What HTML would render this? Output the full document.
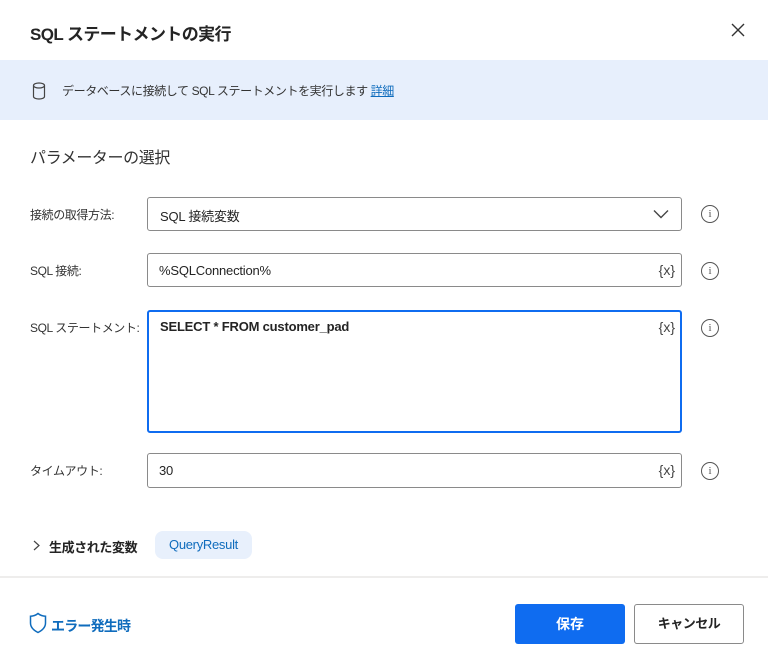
<!DOCTYPE html>
<html><head><meta charset="utf-8"><style>
*{box-sizing:border-box;margin:0;padding:0}
body{width:768px;height:668px;background:#fff;font-family:"Liberation Sans","Noto Sans CJK JP",sans-serif;color:#242424;position:relative;overflow:hidden}
.a{position:absolute;white-space:nowrap}
.title{left:30px;top:20px;font-size:17px;font-weight:bold;letter-spacing:-0.6px}
.banner{left:0;top:60px;width:768px;height:60px;background:#e7effc}
.btxt{left:62px;top:82px;font-size:12px;color:#333;letter-spacing:-0.4px}
.btxt a{color:#0f6cbd;text-decoration:underline}
.h2{left:30px;top:144px;font-size:16px;color:#333;letter-spacing:-0.4px}
.lbl{left:30px;font-size:12px;color:#333;letter-spacing:-0.4px}
.box{left:147px;width:535px;border:1px solid #8a8a8a;border-radius:3px;background:#fff}
.val{font-size:13px;position:absolute;left:12px;top:9px;letter-spacing:-0.2px}
.x{position:absolute;right:6px;top:8px;font-size:14px;color:#444}
.info{left:701px;width:18px;height:18px;border:1.3px solid #555;border-radius:50%;font-size:11px;text-align:center;line-height:16px;color:#555;font-family:"Liberation Serif",serif}
.div{left:0;top:576px;width:768px;height:2px;background:#eeedec}
</style></head><body>
<div class="a title">SQL ステートメントの実行</div>
<svg class="a" style="left:731px;top:23px" width="14" height="14" viewBox="0 0 14 14"><path d="M1 1L13 13M13 1L1 13" stroke="#333" stroke-width="1.4"/></svg>
<div class="a banner"></div>
<svg class="a" style="left:32px;top:82px" width="14" height="18" viewBox="0 0 14 18"><ellipse cx="7" cy="3.5" rx="5.5" ry="2.5" fill="none" stroke="#444" stroke-width="1.2"/><path d="M1.5 3.5V14.5C1.5 16 4 17 7 17S12.5 16 12.5 14.5V3.5" fill="none" stroke="#444" stroke-width="1.2"/></svg>
<div class="a btxt">データベースに接続して SQL ステートメントを実行します <a>詳細</a></div>
<div class="a h2">パラメーターの選択</div>

<div class="a lbl" style="top:206px">接続の取得方法:</div>
<div class="a box" style="top:197px;height:34px"><span class="val" style="top:8px">SQL 接続変数</span>
<svg style="position:absolute;right:12px;top:11px" width="16" height="10" viewBox="0 0 16 10"><path d="M1 1.5L8 8.5L15 1.5" fill="none" stroke="#444" stroke-width="1.4"/></svg></div>
<div class="a info" style="top:205px">i</div>

<div class="a lbl" style="top:262px">SQL 接続:</div>
<div class="a box" style="top:253px;height:34px"><span class="val" style="left:11px">%SQLConnection%</span><span class="x">{x}</span></div>
<div class="a info" style="top:262px">i</div>

<div class="a lbl" style="top:319px">SQL ステートメント:</div>
<div class="a box" style="top:310px;height:123px;border:2px solid #0f6cf0"><span class="val" style="left:11px;top:7px;font-weight:bold">SELECT * FROM customer_pad</span><span class="x" style="top:7px;right:5px">{x}</span></div>
<div class="a info" style="top:319px">i</div>

<div class="a lbl" style="top:462px">タイムアウト:</div>
<div class="a box" style="top:453px;height:35px"><span class="val" style="left:11px">30</span><span class="x">{x}</span></div>
<div class="a info" style="top:462px">i</div>

<svg class="a" style="left:33px;top:540px" width="7" height="11" viewBox="0 0 7 11"><path d="M1 1L6 5.5L1 10" fill="none" stroke="#444" stroke-width="1.2"/></svg>
<div class="a" style="left:49px;top:537px;font-size:13px;font-weight:bold;letter-spacing:-0.4px">生成された変数</div>
<div class="a" style="left:155px;top:531px;width:97px;height:28px;background:#e8f0fc;border-radius:8px;color:#0f6cbd;font-size:13px;text-align:center;line-height:28px;letter-spacing:-0.3px">QueryResult</div>

<div class="a div"></div>
<svg class="a" style="left:29px;top:612px" width="18" height="22" viewBox="0 0 18 22"><path d="M9 1.5C6.5 3.5 4 4.2 1.5 4.2V11C1.5 15.5 5 18.5 9 20.5C13 18.5 16.5 15.5 16.5 11V4.2C14 4.2 11.5 3.5 9 1.5Z" fill="none" stroke="#0f6cbd" stroke-width="1.5"/></svg>
<div class="a" style="left:51px;top:616px;font-size:14px;font-weight:bold;color:#0f6cbd;letter-spacing:-0.8px">エラー発生時</div>
<div class="a" style="left:515px;top:604px;width:110px;height:40px;background:#0f6cf0;border-radius:3px;color:#fff;font-weight:bold;font-size:14px;text-align:center;line-height:40px">保存</div>
<div class="a" style="left:634px;top:604px;width:110px;height:40px;border:1px solid #8a8a8a;border-radius:3px;font-weight:bold;font-size:13px;text-align:center;line-height:38px;letter-spacing:-0.5px">キャンセル</div>
</body></html>
